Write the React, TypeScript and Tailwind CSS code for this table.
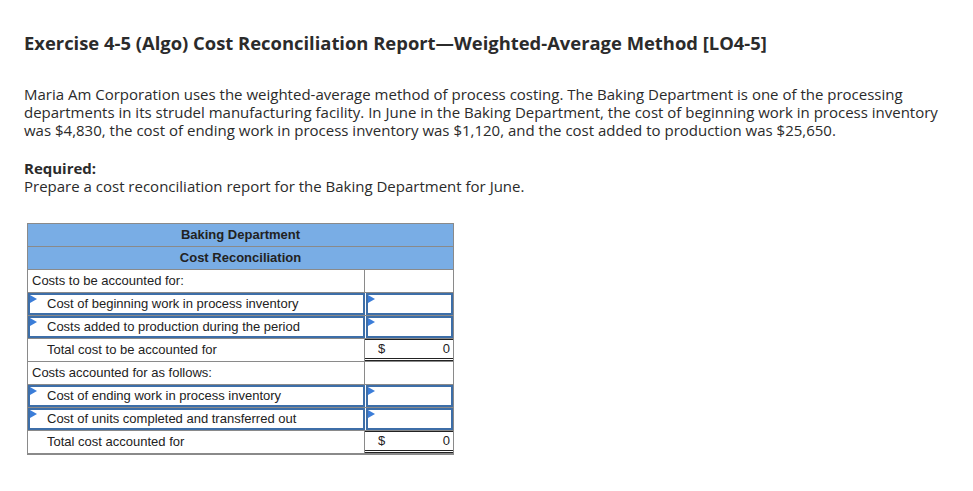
import React from 'react';

type Row =
  | { kind: 'section'; label: string }
  | { kind: 'input'; label: string }
  | { kind: 'total'; label: string; value: string };

const ROWS: Row[] = [
  { kind: 'section', label: 'Costs to be accounted for:' },
  { kind: 'input', label: 'Cost of beginning work in process inventory' },
  { kind: 'input', label: 'Costs added to production during the period' },
  { kind: 'total', label: 'Total cost to be accounted for', value: '0' },
  { kind: 'section', label: 'Costs accounted for as follows:' },
  { kind: 'input', label: 'Cost of ending work in process inventory' },
  { kind: 'input', label: 'Cost of units completed and transferred out' },
  { kind: 'total', label: 'Total cost accounted for', value: '0' },
];

const Flag = () => (
  <span className="absolute left-0 top-0 w-0 h-0 border-t-[4px] border-b-[4px] border-l-[7px] border-t-transparent border-b-transparent border-l-[#3b7dd8]" />
);

const ReportRow = ({ row }: { row: Row }) => {
  if (row.kind === 'section') {
    return (
      <div className="flex h-[23px] border-b border-[#8a8a8a]">
        <div className="w-[337px] pl-[4px] flex items-center border-r border-[#8a8a8a]">{row.label}</div>
        <div className="flex-1" />
      </div>
    );
  }
  if (row.kind === 'input') {
    return (
      <div className="flex h-[23px] border-b border-[#8a8a8a]">
        <div className="relative w-[337px] pl-[17px] flex items-center border-2 border-[#3d6ea8]">
          <Flag />
          {row.label}
        </div>
        <div className="relative flex-1 border-2 border-[#3d6ea8] ml-[1px]">
          <Flag />
        </div>
      </div>
    );
  }
  return (
    <div className="flex h-[23px] border-b border-[#8a8a8a]">
      <div className="w-[337px] pl-[19px] flex items-center border-r border-[#8a8a8a]">{row.label}</div>
      <div className="flex-1 flex items-center justify-between pl-[13px] pr-[3px] border-t border-[#222] border-b-[3px] border-b-[#222] [border-bottom-style:double]">
        <span>$</span>
        <span>{row.value}</span>
      </div>
    </div>
  );
};

const App = () => {
  return (
    <div className="w-[973px] h-[491px] bg-white text-[#2b2b2b] pl-[24px] pt-[31px] font-['Open_Sans','Lato',sans-serif]">
      <h1 className="text-[18.4px] font-bold leading-[24px]">
        Exercise 4-5 (Algo) Cost Reconciliation Report—Weighted-Average Method [LO4-5]
      </h1>
      <p className="mt-[30px] text-[15px] leading-[18px] w-[918px]">
        Maria Am Corporation uses the weighted-average method of process costing. The Baking Department is one of the processing departments in its strudel manufacturing facility. In June in the Baking Department, the cost of beginning work in process inventory was $4,830, the cost of ending work in process inventory was $1,120, and the cost added to production was $25,650.
      </p>
      <p className="mt-[20px] text-[15px] leading-[18px] font-bold">Required:</p>
      <p className="text-[15px] leading-[18px]">Prepare a cost reconciliation report for the Baking Department for June.</p>

      <div className="mt-[28px] ml-[3px] w-[427px] border border-[#8a8a8a] text-[13px] text-[#222] font-['Liberation_Sans',Arial,sans-serif]">
        <div className="h-[23px] flex items-center justify-center bg-[#79ade5] border-b border-[#8a8a8a] font-bold">
          Baking Department
        </div>
        <div className="h-[23px] flex items-center justify-center bg-[#79ade5] border-b border-[#8a8a8a] font-bold">
          Cost Reconciliation
        </div>
        {ROWS.map((row, i) => (
          <ReportRow key={i} row={row} />
        ))}
      </div>
    </div>
  );
};

export default App;
